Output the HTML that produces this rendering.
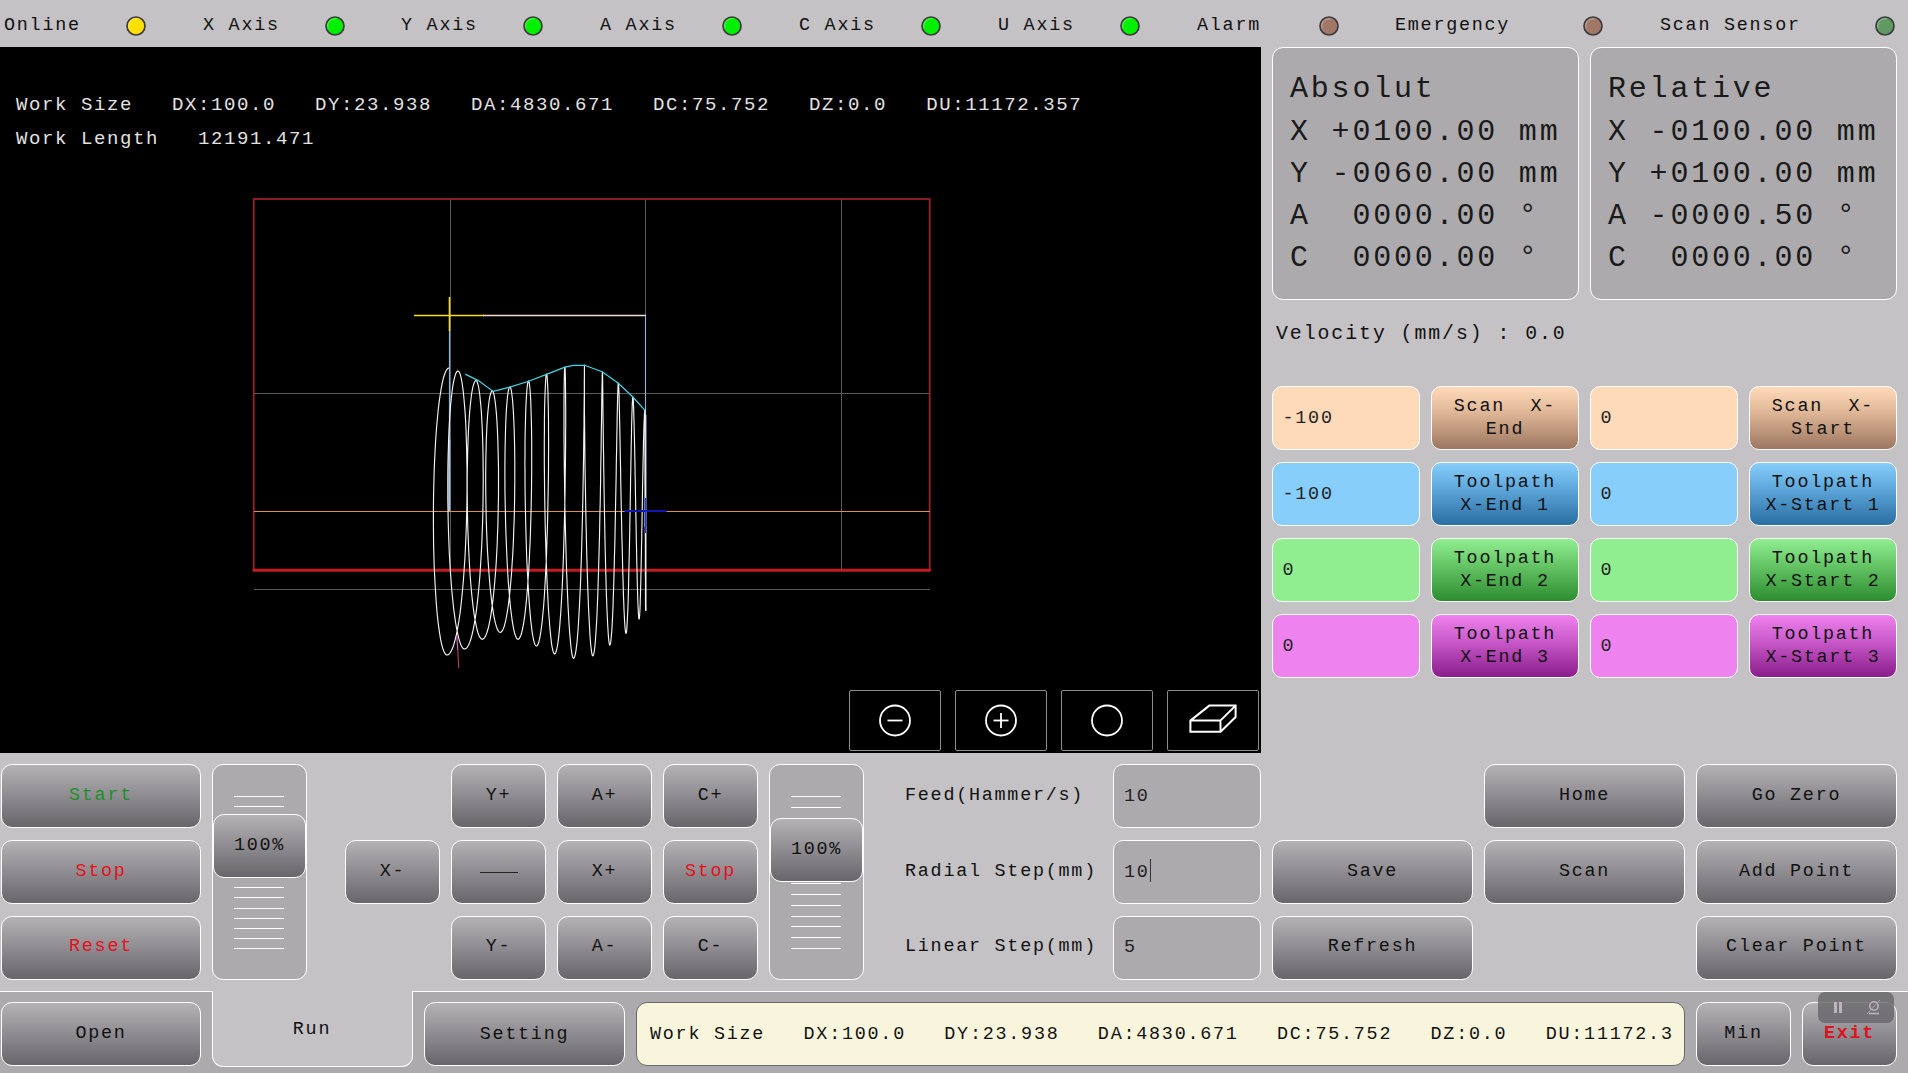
<!DOCTYPE html>
<html><head><meta charset="utf-8"><title>UI</title><style>
html,body{margin:0;padding:0;}
body{width:1908px;height:1073px;overflow:hidden;background:#c4c2c5;position:relative;font-family:"Liberation Mono", monospace;}
.t{position:absolute;white-space:nowrap;line-height:0;height:0;font-family:"Liberation Mono", monospace;}
.t::before{content:'';display:inline-block;height:40px;width:0;vertical-align:baseline;}
.ledsvg{position:absolute;}
.led{position:absolute;width:18px;height:18px;border-radius:50%;border:1.5px solid #3a2a20;box-sizing:content-box;}
#cv{position:absolute;left:0;top:47px;width:1261px;height:706px;background:#000;}
#dw{position:absolute;left:0;top:47px;}
.zb{position:absolute;width:92px;height:61px;box-sizing:border-box;border:1px solid #8c8c8c;border-radius:2px;}
.zb svg{position:absolute;left:-1px;top:-1px;}
.panel{position:absolute;box-sizing:border-box;border:1px solid #fff;border-radius:11px;background:#acaaad;}
.inp{position:absolute;box-sizing:border-box;border:1px solid #fff;border-radius:10px;}
.i-peach{background:#ffdab9} .i-blue{background:#87cefa} .i-green{background:#90ee90} .i-violet{background:#ee82ee} .i-gray{background:#acaaad}
.cb{position:absolute;box-sizing:border-box;border:1px solid #fff;border-radius:10px;}
.b-peach{background:linear-gradient(#ffdab9 0%,#e0b898 40%,#9c7660 100%)}
.b-blue{background:linear-gradient(#87cefa 0%,#5fa8dc 40%,#2a6ea2 100%)}
.b-green{background:linear-gradient(#90ee90 0%,#68c868 40%,#2c8c30 100%)}
.b-violet{background:linear-gradient(#ee82ee 0%,#cc5ccc 40%,#8a1c8c 100%)}
.gb{position:absolute;box-sizing:border-box;border:1px solid #fff;border-radius:11px;background:linear-gradient(#b4b2b5 0%,#8e8c90 50%,#68666a 100%);}
.sl{position:absolute;box-sizing:border-box;border:1px solid #fff;border-radius:11px;background:#acaaad;}
.tk{position:absolute;width:50px;height:1px;background:#fff;}
#bb{position:absolute;left:0;top:991px;width:1908px;height:82px;background:#acaaad;border-top:1px solid #fff;box-sizing:border-box;}
#run{position:absolute;left:212px;top:991px;width:201px;height:76px;box-sizing:border-box;background:#c4c2c5;border:1px solid #fff;border-top:none;border-radius:0 0 11px 11px;}
.status{position:absolute;box-sizing:border-box;background:#f8f5dc;border:1px solid #6a686c;border-radius:11px;}
#ov{position:absolute;left:1818px;top:992px;width:76px;height:31px;border-radius:7px;background:rgba(104,102,106,0.82);}
.pb{position:absolute;top:10px;width:3px;height:11px;background:#b8b6ba;}
</style></head><body>
<div class="t" style="left:4px;top:-10px;font-size:18.4px;color:#111;letter-spacing:1.76px;">Online</div>
<svg class="ledsvg" style="left:125px;top:15px" width="22" height="22" viewBox="0 0 22 22"><circle cx="11" cy="11" r="9" fill="#ffe000" stroke="#3c3a3e" stroke-width="1.7"/><path d="M4.2 13.5 A7.2 7.2 0 0 1 12.5 3.9" fill="none" stroke="rgba(255,255,255,0.35)" stroke-width="1.1"/></svg>
<div class="t" style="left:203px;top:-10px;font-size:18.4px;color:#111;letter-spacing:1.76px;">X&nbsp;Axis</div>
<svg class="ledsvg" style="left:324px;top:15px" width="22" height="22" viewBox="0 0 22 22"><circle cx="11" cy="11" r="9" fill="#00f000" stroke="#3c3a3e" stroke-width="1.7"/><path d="M4.2 13.5 A7.2 7.2 0 0 1 12.5 3.9" fill="none" stroke="rgba(255,255,255,0.35)" stroke-width="1.1"/></svg>
<div class="t" style="left:401px;top:-10px;font-size:18.4px;color:#111;letter-spacing:1.76px;">Y&nbsp;Axis</div>
<svg class="ledsvg" style="left:522px;top:15px" width="22" height="22" viewBox="0 0 22 22"><circle cx="11" cy="11" r="9" fill="#00f000" stroke="#3c3a3e" stroke-width="1.7"/><path d="M4.2 13.5 A7.2 7.2 0 0 1 12.5 3.9" fill="none" stroke="rgba(255,255,255,0.35)" stroke-width="1.1"/></svg>
<div class="t" style="left:600px;top:-10px;font-size:18.4px;color:#111;letter-spacing:1.76px;">A&nbsp;Axis</div>
<svg class="ledsvg" style="left:721px;top:15px" width="22" height="22" viewBox="0 0 22 22"><circle cx="11" cy="11" r="9" fill="#00f000" stroke="#3c3a3e" stroke-width="1.7"/><path d="M4.2 13.5 A7.2 7.2 0 0 1 12.5 3.9" fill="none" stroke="rgba(255,255,255,0.35)" stroke-width="1.1"/></svg>
<div class="t" style="left:799px;top:-10px;font-size:18.4px;color:#111;letter-spacing:1.76px;">C&nbsp;Axis</div>
<svg class="ledsvg" style="left:920px;top:15px" width="22" height="22" viewBox="0 0 22 22"><circle cx="11" cy="11" r="9" fill="#00f000" stroke="#3c3a3e" stroke-width="1.7"/><path d="M4.2 13.5 A7.2 7.2 0 0 1 12.5 3.9" fill="none" stroke="rgba(255,255,255,0.35)" stroke-width="1.1"/></svg>
<div class="t" style="left:998px;top:-10px;font-size:18.4px;color:#111;letter-spacing:1.76px;">U&nbsp;Axis</div>
<svg class="ledsvg" style="left:1119px;top:15px" width="22" height="22" viewBox="0 0 22 22"><circle cx="11" cy="11" r="9" fill="#00f000" stroke="#3c3a3e" stroke-width="1.7"/><path d="M4.2 13.5 A7.2 7.2 0 0 1 12.5 3.9" fill="none" stroke="rgba(255,255,255,0.35)" stroke-width="1.1"/></svg>
<div class="t" style="left:1197px;top:-10px;font-size:18.4px;color:#111;letter-spacing:1.76px;">Alarm</div>
<svg class="ledsvg" style="left:1318px;top:15px" width="22" height="22" viewBox="0 0 22 22"><circle cx="11" cy="11" r="9" fill="#a07868" stroke="#3c3a3e" stroke-width="1.7"/><path d="M4.2 13.5 A7.2 7.2 0 0 1 12.5 3.9" fill="none" stroke="rgba(255,255,255,0.35)" stroke-width="1.1"/></svg>
<div class="t" style="left:1395px;top:-10px;font-size:18.4px;color:#111;letter-spacing:1.76px;">Emergency</div>
<svg class="ledsvg" style="left:1582px;top:15px" width="22" height="22" viewBox="0 0 22 22"><circle cx="11" cy="11" r="9" fill="#a07868" stroke="#3c3a3e" stroke-width="1.7"/><path d="M4.2 13.5 A7.2 7.2 0 0 1 12.5 3.9" fill="none" stroke="rgba(255,255,255,0.35)" stroke-width="1.1"/></svg>
<div class="t" style="left:1660px;top:-10px;font-size:18.4px;color:#111;letter-spacing:1.76px;">Scan&nbsp;Sensor</div>
<svg class="ledsvg" style="left:1874px;top:15px" width="22" height="22" viewBox="0 0 22 22"><circle cx="11" cy="11" r="9" fill="#5f9a62" stroke="#3c3a3e" stroke-width="1.7"/><path d="M4.2 13.5 A7.2 7.2 0 0 1 12.5 3.9" fill="none" stroke="rgba(255,255,255,0.35)" stroke-width="1.1"/></svg>
<div id="cv"></div>
<div class="t" style="left:16px;top:70px;font-size:19px;color:#e2e2e2;letter-spacing:1.6px;">Work&nbsp;Size&nbsp;&nbsp;&nbsp;DX:100.0&nbsp;&nbsp;&nbsp;DY:23.938&nbsp;&nbsp;&nbsp;DA:4830.671&nbsp;&nbsp;&nbsp;DC:75.752&nbsp;&nbsp;&nbsp;DZ:0.0&nbsp;&nbsp;&nbsp;DU:11172.357</div>
<div class="t" style="left:16px;top:104px;font-size:19px;color:#e2e2e2;letter-spacing:1.6px;">Work&nbsp;Length&nbsp;&nbsp;&nbsp;12191.471</div>
<svg id="dw" width="1261" height="706" viewBox="0 47 1261 706" fill="none">
<line x1="450.5" y1="199" x2="450.5" y2="570" stroke="#5a5a5a" stroke-width="1"/>
<line x1="645.5" y1="199" x2="645.5" y2="570" stroke="#5a5a5a" stroke-width="1"/>
<line x1="841.5" y1="199" x2="841.5" y2="570" stroke="#5a5a5a" stroke-width="1"/>
<line x1="254" y1="393.5" x2="930" y2="393.5" stroke="#5a5a5a" stroke-width="1"/>
<line x1="254" y1="589.5" x2="930" y2="589.5" stroke="#5a5a5a" stroke-width="1"/>
<rect x="253.7" y="199" width="676" height="371" stroke="#a42028" stroke-width="1.7"/>
<line x1="252.6" y1="570.2" x2="930.8" y2="570.2" stroke="#c41a20" stroke-width="3"/>
<line x1="254" y1="511.5" x2="930" y2="511.5" stroke="#e09040" stroke-width="1.2"/>
<line x1="483" y1="315.5" x2="646" y2="315.5" stroke="#f0dcd0" stroke-width="1.3"/>
<line x1="414" y1="315.5" x2="484" y2="315.5" stroke="#f8dc20" stroke-width="1.3"/>
<line x1="449.5" y1="297" x2="449.5" y2="331" stroke="#f8dc20" stroke-width="1.6"/>
<line x1="449.5" y1="331" x2="449.5" y2="511" stroke="#8fb4dc" stroke-width="1.2"/>
<line x1="449.3" y1="440" x2="449.3" y2="511" stroke="#a8c8e8" stroke-width="2"/>
<line x1="645.5" y1="316" x2="645.5" y2="415" stroke="#8fb4dc" stroke-width="1.1"/>
<line x1="645.5" y1="415" x2="645.5" y2="527" stroke="#a8c4e4" stroke-width="2"/>
<line x1="645.8" y1="527" x2="645.8" y2="611" stroke="#c0c0c0" stroke-width="1.6"/>
<path d="M449.0,368.0 L447.8,368.4 L446.6,369.8 L445.5,372.0 L444.3,375.0 L443.2,378.9 L442.1,383.6 L441.1,389.1 L440.1,395.4 L439.1,402.4 L438.2,410.0 L437.4,418.3 L436.6,427.2 L435.9,436.5 L435.3,446.4 L434.8,456.6 L434.3,467.2 L434.0,478.0 L433.7,489.1 L433.5,500.2 L433.4,511.5 L433.4,522.8 L433.5,533.9 L433.6,545.0 L433.9,555.8 L434.2,566.4 L434.7,576.6 L435.2,586.5 L435.8,595.8 L436.4,604.7 L437.1,613.0 L437.9,620.6 L438.8,627.6 L439.7,633.9 L440.6,639.4 L441.6,644.1 L442.7,648.0 L443.7,651.0 L444.8,653.2 L445.9,654.6 L447.0,655.0 L448.4,654.6 L449.8,653.3 L451.2,651.1 L452.6,648.1 L453.9,644.2 L455.2,639.5 L456.5,634.1 L457.7,627.9 L458.9,621.0 L460.0,613.4 L461.0,605.2 L461.9,596.5 L462.8,587.2 L463.6,577.5 L464.3,567.3 L465.0,556.9 L465.5,546.1 L466.0,535.2 L466.4,524.1 L466.7,513.0 L466.9,501.9 L467.0,490.8 L467.0,479.9 L467.0,469.1 L466.8,458.7 L466.6,448.5 L466.3,438.8 L466.0,429.5 L465.6,420.8 L465.1,412.6 L464.5,405.0 L463.9,398.1 L463.3,391.9 L462.6,386.5 L461.9,381.8 L461.1,377.9 L460.4,374.9 L459.6,372.7 L458.8,371.4 L458.0,371.0 L457.1,371.4 L456.2,372.7 L455.3,374.8 L454.5,377.8 L453.6,381.6 L452.8,386.2 L452.1,391.5 L451.4,397.5 L450.7,404.3 L450.1,411.7 L449.6,419.7 L449.1,428.3 L448.7,437.4 L448.4,446.9 L448.1,456.8 L447.9,467.0 L447.8,477.6 L447.8,488.3 L447.8,499.1 L448.0,510.0 L448.2,520.9 L448.5,531.7 L448.9,542.4 L449.3,553.0 L449.9,563.2 L450.5,573.1 L451.2,582.6 L451.9,591.7 L452.8,600.3 L453.6,608.3 L454.6,615.7 L455.6,622.5 L456.6,628.5 L457.7,633.8 L458.8,638.4 L459.9,642.2 L461.1,645.2 L462.2,647.3 L463.4,648.6 L464.6,649.0 L465.9,648.6 L467.2,647.3 L468.5,645.3 L469.7,642.4 L471.0,638.8 L472.1,634.4 L473.3,629.2 L474.4,623.4 L475.5,616.8 L476.5,609.7 L477.4,602.0 L478.3,593.7 L479.1,584.9 L479.9,575.7 L480.5,566.2 L481.1,556.3 L481.7,546.1 L482.1,535.8 L482.5,525.3 L482.8,514.8 L483.0,504.3 L483.1,493.8 L483.2,483.5 L483.2,473.3 L483.1,463.4 L483.0,453.9 L482.8,444.7 L482.5,435.9 L482.2,427.6 L481.8,419.9 L481.4,412.8 L480.9,406.2 L480.3,400.4 L479.8,395.2 L479.2,390.8 L478.6,387.2 L478.0,384.3 L477.3,382.3 L476.7,381.0 L476.0,380.6 L475.2,381.0 L474.4,382.2 L473.7,384.2 L472.9,386.9 L472.2,390.4 L471.5,394.7 L470.9,399.7 L470.3,405.3 L469.7,411.6 L469.2,418.5 L468.7,425.9 L468.3,433.9 L468.0,442.4 L467.7,451.2 L467.5,460.4 L467.3,470.0 L467.2,479.8 L467.2,489.7 L467.3,499.8 L467.4,509.9 L467.6,520.1 L467.9,530.2 L468.3,540.1 L468.7,549.9 L469.2,559.5 L469.7,568.7 L470.3,577.5 L471.0,586.0 L471.7,594.0 L472.5,601.4 L473.3,608.3 L474.2,614.6 L475.1,620.2 L476.1,625.2 L477.0,629.5 L478.0,633.0 L479.1,635.7 L480.1,637.7 L481.2,638.9 L482.2,639.3 L483.3,638.9 L484.5,637.8 L485.6,635.9 L486.7,633.2 L487.8,629.8 L488.8,625.8 L489.8,621.0 L490.8,615.6 L491.7,609.6 L492.6,602.9 L493.4,595.8 L494.2,588.1 L494.9,580.0 L495.6,571.5 L496.2,562.7 L496.7,553.5 L497.2,544.1 L497.5,534.6 L497.9,524.9 L498.1,515.1 L498.3,505.4 L498.5,495.7 L498.5,486.2 L498.5,476.8 L498.5,467.6 L498.3,458.8 L498.1,450.3 L497.9,442.2 L497.6,434.5 L497.3,427.4 L496.9,420.7 L496.5,414.7 L496.0,409.3 L495.5,404.5 L495.0,400.5 L494.5,397.1 L493.9,394.4 L493.3,392.5 L492.8,391.4 L492.2,391.0 L491.6,391.4 L491.0,392.5 L490.4,394.3 L489.8,396.9 L489.2,400.2 L488.7,404.2 L488.2,408.8 L487.7,414.1 L487.3,419.9 L486.9,426.4 L486.6,433.3 L486.3,440.8 L486.1,448.6 L485.9,456.9 L485.8,465.5 L485.7,474.4 L485.7,483.5 L485.8,492.8 L485.9,502.2 L486.1,511.7 L486.3,521.2 L486.6,530.6 L487.0,539.9 L487.4,549.0 L487.9,557.9 L488.5,566.5 L489.1,574.8 L489.7,582.6 L490.4,590.1 L491.2,597.0 L491.9,603.5 L492.8,609.3 L493.6,614.6 L494.5,619.2 L495.4,623.2 L496.4,626.5 L497.3,629.1 L498.3,630.9 L499.2,632.0 L500.2,632.4 L501.2,632.0 L502.2,630.9 L503.2,629.0 L504.2,626.4 L505.1,623.1 L506.0,619.0 L506.9,614.3 L507.8,609.0 L508.6,603.0 L509.4,596.5 L510.1,589.4 L510.8,581.8 L511.5,573.8 L512.0,565.4 L512.6,556.7 L513.1,547.6 L513.5,538.3 L513.8,528.9 L514.2,519.3 L514.4,509.7 L514.6,500.1 L514.7,490.5 L514.8,481.1 L514.8,471.8 L514.8,462.7 L514.7,454.0 L514.6,445.6 L514.4,437.6 L514.2,430.0 L513.9,422.9 L513.6,416.4 L513.3,410.4 L512.9,405.1 L512.6,400.4 L512.1,396.3 L511.7,393.0 L511.3,390.4 L510.8,388.5 L510.4,387.4 L509.9,387.0 L509.4,387.4 L508.9,388.6 L508.4,390.5 L508.0,393.2 L507.5,396.6 L507.1,400.7 L506.7,405.6 L506.3,411.1 L506.0,417.2 L505.7,423.9 L505.5,431.2 L505.3,439.0 L505.1,447.2 L505.0,455.9 L504.9,464.9 L504.9,474.2 L504.9,483.7 L505.0,493.4 L505.2,503.3 L505.4,513.1 L505.6,523.0 L505.9,532.9 L506.3,542.6 L506.7,552.1 L507.1,561.4 L507.6,570.4 L508.1,579.1 L508.7,587.3 L509.4,595.1 L510.0,602.4 L510.7,609.1 L511.5,615.2 L512.2,620.7 L513.0,625.6 L513.8,629.7 L514.6,633.1 L515.5,635.8 L516.3,637.7 L517.1,638.9 L518.0,639.3 L518.9,638.9 L519.8,637.7 L520.7,635.7 L521.6,633.0 L522.4,629.5 L523.3,625.2 L524.1,620.3 L524.9,614.6 L525.6,608.4 L526.3,601.5 L527.0,594.0 L527.6,586.1 L528.2,577.6 L528.8,568.8 L529.3,559.6 L529.7,550.1 L530.2,540.3 L530.5,530.4 L530.8,520.3 L531.1,510.1 L531.3,500.0 L531.5,489.9 L531.6,480.0 L531.7,470.2 L531.7,460.7 L531.7,451.5 L531.7,442.7 L531.6,434.2 L531.5,426.3 L531.3,418.8 L531.1,411.9 L530.9,405.7 L530.7,400.0 L530.4,395.1 L530.1,390.8 L529.8,387.3 L529.5,384.6 L529.2,382.6 L528.9,381.4 L528.6,381.0 L528.2,381.4 L527.8,382.6 L527.5,384.7 L527.1,387.5 L526.8,391.1 L526.5,395.4 L526.2,400.5 L525.9,406.3 L525.7,412.8 L525.5,419.8 L525.3,427.5 L525.1,435.6 L525.0,444.3 L525.0,453.4 L524.9,462.8 L525.0,472.6 L525.0,482.6 L525.1,492.8 L525.3,503.2 L525.5,513.5 L525.7,523.9 L526.0,534.3 L526.3,544.5 L526.6,554.5 L527.0,564.3 L527.5,573.7 L528.0,582.8 L528.5,591.5 L529.0,599.6 L529.6,607.3 L530.2,614.3 L530.8,620.8 L531.5,626.6 L532.1,631.7 L532.8,636.0 L533.5,639.6 L534.2,642.4 L535.0,644.5 L535.7,645.7 L536.4,646.1 L537.2,645.7 L538.0,644.4 L538.7,642.3 L539.5,639.4 L540.2,635.7 L540.9,631.3 L541.6,626.1 L542.3,620.1 L542.9,613.5 L543.6,606.3 L544.2,598.4 L544.7,590.0 L545.2,581.1 L545.7,571.8 L546.2,562.1 L546.6,552.1 L546.9,541.8 L547.3,531.3 L547.6,520.7 L547.8,510.1 L548.0,499.4 L548.2,488.8 L548.4,478.3 L548.5,468.0 L548.5,458.0 L548.6,448.3 L548.6,439.0 L548.5,430.1 L548.5,421.7 L548.4,413.8 L548.3,406.6 L548.1,400.0 L548.0,394.0 L547.8,388.8 L547.6,384.4 L547.4,380.7 L547.2,377.8 L547.0,375.7 L546.8,374.4 L546.6,374.0 L546.3,374.4 L546.1,375.7 L545.8,377.9 L545.6,380.9 L545.4,384.7 L545.2,389.3 L545.0,394.6 L544.8,400.7 L544.6,407.5 L544.5,415.0 L544.4,423.1 L544.4,431.7 L544.3,440.9 L544.3,450.4 L544.3,460.4 L544.4,470.7 L544.5,481.3 L544.6,492.1 L544.8,503.0 L545.0,514.0 L545.2,525.0 L545.5,535.9 L545.8,546.7 L546.1,557.3 L546.5,567.6 L546.9,577.6 L547.3,587.1 L547.8,596.3 L548.2,604.9 L548.7,613.0 L549.3,620.5 L549.8,627.3 L550.4,633.4 L551.0,638.7 L551.5,643.3 L552.1,647.1 L552.8,650.1 L553.4,652.3 L554.0,653.6 L554.6,654.0 L555.3,653.6 L555.9,652.2 L556.6,650.0 L557.2,647.0 L557.9,643.1 L558.5,638.4 L559.1,632.9 L559.7,626.6 L560.2,619.6 L560.8,612.0 L561.3,603.7 L561.8,594.8 L562.3,585.5 L562.7,575.6 L563.1,565.4 L563.5,554.8 L563.8,544.0 L564.1,532.9 L564.4,521.8 L564.7,510.5 L564.9,499.2 L565.1,488.1 L565.2,477.0 L565.4,466.2 L565.5,455.6 L565.6,445.4 L565.6,435.5 L565.7,426.2 L565.7,417.3 L565.7,409.0 L565.6,401.4 L565.6,394.4 L565.5,388.1 L565.5,382.6 L565.4,377.9 L565.3,374.0 L565.2,371.0 L565.1,368.8 L565.0,367.4 L564.9,367.0 L564.8,367.4 L564.6,368.8 L564.5,371.0 L564.4,374.1 L564.3,378.1 L564.2,382.9 L564.1,388.5 L564.1,394.8 L564.0,401.9 L564.0,409.7 L564.0,418.1 L564.0,427.0 L564.0,436.5 L564.1,446.5 L564.2,456.9 L564.3,467.6 L564.5,478.6 L564.6,489.9 L564.8,501.2 L565.0,512.6 L565.3,524.1 L565.6,535.4 L565.9,546.7 L566.2,557.7 L566.5,568.4 L566.9,578.8 L567.3,588.8 L567.7,598.3 L568.1,607.2 L568.6,615.6 L569.0,623.4 L569.5,630.5 L570.0,636.8 L570.5,642.4 L571.0,647.2 L571.5,651.2 L572.0,654.3 L572.5,656.5 L573.1,657.9 L573.6,658.3 L574.2,657.8 L574.7,656.5 L575.3,654.2 L575.9,651.1 L576.4,647.1 L577.0,642.3 L577.5,636.7 L578.0,630.3 L578.5,623.2 L578.9,615.3 L579.4,606.9 L579.8,597.8 L580.3,588.3 L580.7,578.2 L581.0,567.8 L581.4,557.0 L581.7,545.9 L582.0,534.6 L582.3,523.2 L582.6,511.6 L582.8,500.1 L583.0,488.7 L583.2,477.4 L583.4,466.3 L583.6,455.5 L583.7,445.1 L583.8,435.0 L584.0,425.5 L584.0,416.4 L584.1,408.0 L584.2,400.1 L584.3,393.0 L584.3,386.6 L584.3,381.0 L584.4,376.2 L584.4,372.2 L584.4,369.1 L584.5,366.8 L584.5,365.5 L584.5,365.0 L584.5,365.4 L584.4,366.8 L584.4,369.0 L584.4,372.1 L584.4,376.1 L584.4,380.9 L584.4,386.4 L584.4,392.8 L584.4,399.8 L584.4,407.6 L584.5,416.0 L584.6,425.0 L584.7,434.5 L584.8,444.4 L584.9,454.8 L585.0,465.5 L585.2,476.5 L585.4,487.7 L585.6,499.0 L585.8,510.4 L586.0,521.9 L586.3,533.2 L586.5,544.4 L586.8,555.4 L587.1,566.1 L587.4,576.5 L587.7,586.4 L588.1,595.9 L588.4,604.9 L588.8,613.3 L589.2,621.1 L589.6,628.1 L589.9,634.5 L590.3,640.0 L590.7,644.8 L591.2,648.8 L591.6,651.9 L592.0,654.1 L592.4,655.5 L592.8,655.9 L593.2,655.5 L593.7,654.2 L594.1,652.0 L594.6,649.0 L595.0,645.1 L595.4,640.4 L595.8,635.0 L596.2,628.8 L596.6,621.9 L597.0,614.3 L597.3,606.1 L597.7,597.4 L598.0,588.1 L598.3,578.4 L598.6,568.3 L598.9,557.8 L599.2,547.1 L599.5,536.2 L599.7,525.1 L599.9,514.0 L600.2,502.8 L600.4,491.7 L600.6,480.8 L600.7,470.1 L600.9,459.6 L601.1,449.5 L601.2,439.8 L601.3,430.5 L601.5,421.8 L601.6,413.6 L601.7,406.0 L601.8,399.1 L601.9,392.9 L602.0,387.5 L602.1,382.8 L602.2,378.9 L602.2,375.9 L602.3,373.7 L602.4,372.4 L602.5,372.0 L602.5,372.4 L602.6,373.7 L602.6,375.8 L602.6,378.7 L602.7,382.4 L602.7,386.9 L602.8,392.1 L602.8,398.1 L602.9,404.7 L603.0,412.0 L603.1,419.9 L603.2,428.3 L603.3,437.2 L603.4,446.6 L603.6,456.3 L603.7,466.4 L603.9,476.7 L604.0,487.2 L604.2,497.8 L604.4,508.6 L604.6,519.3 L604.8,529.9 L605.0,540.4 L605.2,550.7 L605.5,560.8 L605.7,570.5 L606.0,579.9 L606.2,588.8 L606.5,597.2 L606.8,605.1 L607.1,612.4 L607.4,619.0 L607.7,625.0 L608.0,630.2 L608.3,634.7 L608.6,638.4 L608.9,641.3 L609.2,643.4 L609.5,644.7 L609.8,645.1 L610.1,644.7 L610.5,643.5 L610.8,641.5 L611.1,638.7 L611.4,635.1 L611.8,630.8 L612.1,625.8 L612.4,620.1 L612.7,613.7 L613.0,606.7 L613.2,599.2 L613.5,591.1 L613.8,582.5 L614.0,573.5 L614.3,564.2 L614.5,554.5 L614.8,544.6 L615.0,534.6 L615.2,524.3 L615.4,514.0 L615.6,503.8 L615.8,493.5 L616.0,483.5 L616.2,473.6 L616.3,463.9 L616.5,454.6 L616.7,445.6 L616.8,437.0 L617.0,428.9 L617.1,421.4 L617.2,414.4 L617.4,408.0 L617.5,402.3 L617.6,397.3 L617.8,393.0 L617.9,389.4 L618.0,386.6 L618.1,384.6 L618.3,383.4 L618.4,383.0 L618.5,383.4 L618.6,384.5 L618.7,386.5 L618.8,389.1 L619.0,392.5 L619.1,396.6 L619.2,401.4 L619.3,406.9 L619.5,413.0 L619.6,419.7 L619.8,426.9 L619.9,434.6 L620.1,442.8 L620.2,451.4 L620.4,460.3 L620.6,469.5 L620.7,479.0 L620.9,488.6 L621.1,498.4 L621.3,508.2 L621.5,518.0 L621.7,527.8 L621.9,537.4 L622.2,546.9 L622.4,556.1 L622.6,565.0 L622.8,573.6 L623.1,581.8 L623.3,589.5 L623.5,596.7 L623.8,603.4 L624.0,609.5 L624.3,615.0 L624.5,619.8 L624.8,623.9 L625.0,627.3 L625.3,629.9 L625.5,631.9 L625.8,633.0 L626.0,633.4 L626.2,633.0 L626.5,631.9 L626.7,630.1 L626.9,627.6 L627.1,624.4 L627.3,620.5 L627.5,616.0 L627.8,610.8 L628.0,605.1 L628.2,598.8 L628.4,592.0 L628.6,584.7 L628.7,577.0 L628.9,568.9 L629.1,560.4 L629.3,551.7 L629.5,542.8 L629.7,533.7 L629.8,524.5 L630.0,515.2 L630.2,505.9 L630.3,496.7 L630.5,487.6 L630.6,478.7 L630.8,470.0 L630.9,461.5 L631.1,453.4 L631.2,445.7 L631.4,438.4 L631.5,431.6 L631.6,425.3 L631.8,419.6 L631.9,414.4 L632.1,409.9 L632.2,406.0 L632.3,402.8 L632.5,400.3 L632.6,398.5 L632.8,397.4 L632.9,397.0 L633.0,397.3 L633.2,398.4 L633.3,400.1 L633.4,402.4 L633.5,405.5 L633.7,409.1 L633.8,413.4 L633.9,418.2 L634.1,423.6 L634.2,429.5 L634.4,435.9 L634.5,442.8 L634.7,450.0 L634.8,457.6 L635.0,465.6 L635.1,473.7 L635.3,482.1 L635.4,490.7 L635.6,499.3 L635.7,508.1 L635.9,516.8 L636.1,525.4 L636.2,534.0 L636.4,542.4 L636.6,550.5 L636.7,558.5 L636.9,566.1 L637.1,573.3 L637.2,580.2 L637.4,586.6 L637.6,592.5 L637.7,597.9 L637.9,602.7 L638.1,607.0 L638.3,610.6 L638.4,613.7 L638.6,616.0 L638.8,617.7 L638.9,618.8 L639.1,619.1 L639.3,618.8 L639.4,617.8 L639.6,616.2 L639.7,614.0 L639.9,611.1 L640.0,607.7 L640.2,603.7 L640.3,599.1 L640.5,594.1 L640.6,588.5 L640.8,582.4 L640.9,576.0 L641.1,569.2 L641.2,562.0 L641.4,554.6 L641.5,546.9 L641.7,539.0 L641.8,530.9 L642.0,522.8 L642.1,514.5 L642.3,506.3 L642.4,498.2 L642.5,490.1 L642.7,482.2 L642.8,474.5 L643.0,467.1 L643.1,459.9 L643.3,453.1 L643.4,446.7 L643.5,440.6 L643.7,435.0 L643.8,430.0 L644.0,425.4 L644.1,421.4 L644.3,418.0 L644.4,415.1 L644.6,412.9 L644.7,411.3 L644.9,410.3 L645.0,410.0 L645.0,410.3 L645.0,411.2 L645.0,412.8 L645.1,414.9 L645.1,417.6 L645.1,420.9 L645.1,424.8 L645.1,429.1 L645.1,434.0 L645.1,439.4 L645.2,445.1 L645.2,451.3 L645.2,457.9 L645.2,464.7 L645.2,471.9 L645.2,479.3 L645.3,486.8 L645.3,494.6 L645.3,502.4 L645.3,510.2 L645.3,518.1 L645.3,525.9 L645.3,533.7 L645.4,541.2 L645.4,548.6 L645.4,555.8 L645.4,562.6 L645.4,569.2 L645.4,575.4 L645.5,581.1 L645.5,586.5 L645.5,591.4 L645.5,595.7 L645.5,599.6 L645.5,602.9 L645.5,605.6 L645.6,607.7 L645.6,609.3 L645.6,610.2 L645.6,610.5" stroke="#f4f4f4" stroke-width="1.15" stroke-linejoin="round"/>
<polyline points="465.2,374.1 478.3,380.6 493.2,391.4 509.9,387.1 528.6,381.2 547.2,374.1 564.9,367.2 573.3,365.3 584.5,365.3 602.2,371.7 618,383 632.9,397 645,410.4" stroke="#40d8e8" stroke-width="1.2"/>
<line x1="624.5" y1="511" x2="666.5" y2="511" stroke="#0c18b0" stroke-width="2"/>
<line x1="645.5" y1="498" x2="645.5" y2="533" stroke="#2030e0" stroke-width="1.2"/>
<line x1="456.8" y1="636" x2="457.8" y2="650" stroke="#e060c0" stroke-width="1.2"/>
<line x1="457.8" y1="650" x2="458.7" y2="668" stroke="#c04040" stroke-width="1.1"/>
</svg>
<div class="zb" style="left:849px;top:690px"><svg width="92" height="61" viewBox="0 0 92 61" fill="none"><circle cx="46" cy="30.5" r="15" stroke="#fff" stroke-width="1.8"/><line x1="38.5" y1="30.5" x2="53.5" y2="30.5" stroke="#fff" stroke-width="1.8"/></svg></div>
<div class="zb" style="left:955px;top:690px"><svg width="92" height="61" viewBox="0 0 92 61" fill="none"><circle cx="46" cy="30.5" r="15" stroke="#fff" stroke-width="1.8"/><line x1="38.5" y1="30.5" x2="53.5" y2="30.5" stroke="#fff" stroke-width="1.8"/><line x1="46" y1="23" x2="46" y2="38" stroke="#fff" stroke-width="1.8"/></svg></div>
<div class="zb" style="left:1061px;top:690px"><svg width="92" height="61" viewBox="0 0 92 61" fill="none"><circle cx="46" cy="30.5" r="15" stroke="#fff" stroke-width="1.8"/></svg></div>
<div class="zb" style="left:1167px;top:690px"><svg width="92" height="61" viewBox="0 0 92 61" fill="none"><path d="M23.4 30.6 L42.3 15.6 L68.6 15.6 L68.6 27 L53.6 41.7 L23.4 41.7 Z M23.4 30.6 L53.4 30.6 L68.6 15.6 M53.4 30.6 L53.6 41.7" stroke="#fff" stroke-width="2" stroke-linejoin="miter"/></svg></div>
<div class="panel" style="left:1272px;top:47px;width:307px;height:253px;"></div>
<div class="panel" style="left:1590px;top:47px;width:307px;height:253px;"></div>
<div class="t" style="left:1290px;top:57px;font-size:30px;color:#1a1a1a;letter-spacing:2.8px;">Absolut</div>
<div class="t" style="left:1290px;top:100px;font-size:30px;color:#1a1a1a;letter-spacing:2.8px;">X&nbsp;+0100.00&nbsp;mm</div>
<div class="t" style="left:1290px;top:142px;font-size:30px;color:#1a1a1a;letter-spacing:2.8px;">Y&nbsp;-0060.00&nbsp;mm</div>
<div class="t" style="left:1290px;top:184px;font-size:30px;color:#1a1a1a;letter-spacing:2.8px;">A&nbsp;&nbsp;0000.00&nbsp;°</div>
<div class="t" style="left:1290px;top:226px;font-size:30px;color:#1a1a1a;letter-spacing:2.8px;">C&nbsp;&nbsp;0000.00&nbsp;°</div>
<div class="t" style="left:1608px;top:57px;font-size:30px;color:#1a1a1a;letter-spacing:2.8px;">Relative</div>
<div class="t" style="left:1608px;top:100px;font-size:30px;color:#1a1a1a;letter-spacing:2.8px;">X&nbsp;-0100.00&nbsp;mm</div>
<div class="t" style="left:1608px;top:142px;font-size:30px;color:#1a1a1a;letter-spacing:2.8px;">Y&nbsp;+0100.00&nbsp;mm</div>
<div class="t" style="left:1608px;top:184px;font-size:30px;color:#1a1a1a;letter-spacing:2.8px;">A&nbsp;-0000.50&nbsp;°</div>
<div class="t" style="left:1608px;top:226px;font-size:30px;color:#1a1a1a;letter-spacing:2.8px;">C&nbsp;&nbsp;0000.00&nbsp;°</div>
<div class="t" style="left:1276px;top:299px;font-size:19.8px;color:#111;letter-spacing:1.97px;">Velocity&nbsp;(mm/s)&nbsp;:&nbsp;0.0</div>
<div class="inp i-peach" style="left:1272px;top:386px;width:148px;height:64px;"></div>
<div class="t" style="left:1282.5px;top:383px;font-size:18.4px;color:#222;letter-spacing:1.76px;">-100</div>
<div class="cb b-peach" style="left:1431px;top:386px;width:148px;height:64px;"></div>
<div class="t" style="left:1453.8px;top:371px;font-size:18.4px;color:#111;letter-spacing:1.76px;">Scan&nbsp;&nbsp;X-</div>
<div class="t" style="left:1485.8px;top:393.6px;font-size:18.4px;color:#111;letter-spacing:1.76px;">End</div>
<div class="inp i-peach" style="left:1590px;top:386px;width:148px;height:64px;"></div>
<div class="t" style="left:1600.5px;top:383px;font-size:18.4px;color:#222;letter-spacing:1.76px;">0</div>
<div class="cb b-peach" style="left:1749px;top:386px;width:148px;height:64px;"></div>
<div class="t" style="left:1771.8px;top:371px;font-size:18.4px;color:#111;letter-spacing:1.76px;">Scan&nbsp;&nbsp;X-</div>
<div class="t" style="left:1791.0px;top:393.6px;font-size:18.4px;color:#111;letter-spacing:1.76px;">Start</div>
<div class="inp i-blue" style="left:1272px;top:462px;width:148px;height:64px;"></div>
<div class="t" style="left:1282.5px;top:459px;font-size:18.4px;color:#222;letter-spacing:1.76px;">-100</div>
<div class="cb b-blue" style="left:1431px;top:462px;width:148px;height:64px;"></div>
<div class="t" style="left:1453.8px;top:447px;font-size:18.4px;color:#111;letter-spacing:1.76px;">Toolpath</div>
<div class="t" style="left:1460.2px;top:469.6px;font-size:18.4px;color:#111;letter-spacing:1.76px;">X-End&nbsp;1</div>
<div class="inp i-blue" style="left:1590px;top:462px;width:148px;height:64px;"></div>
<div class="t" style="left:1600.5px;top:459px;font-size:18.4px;color:#222;letter-spacing:1.76px;">0</div>
<div class="cb b-blue" style="left:1749px;top:462px;width:148px;height:64px;"></div>
<div class="t" style="left:1771.8px;top:447px;font-size:18.4px;color:#111;letter-spacing:1.76px;">Toolpath</div>
<div class="t" style="left:1765.4px;top:469.6px;font-size:18.4px;color:#111;letter-spacing:1.76px;">X-Start&nbsp;1</div>
<div class="inp i-green" style="left:1272px;top:538px;width:148px;height:64px;"></div>
<div class="t" style="left:1282.5px;top:535px;font-size:18.4px;color:#222;letter-spacing:1.76px;">0</div>
<div class="cb b-green" style="left:1431px;top:538px;width:148px;height:64px;"></div>
<div class="t" style="left:1453.8px;top:523px;font-size:18.4px;color:#111;letter-spacing:1.76px;">Toolpath</div>
<div class="t" style="left:1460.2px;top:545.6px;font-size:18.4px;color:#111;letter-spacing:1.76px;">X-End&nbsp;2</div>
<div class="inp i-green" style="left:1590px;top:538px;width:148px;height:64px;"></div>
<div class="t" style="left:1600.5px;top:535px;font-size:18.4px;color:#222;letter-spacing:1.76px;">0</div>
<div class="cb b-green" style="left:1749px;top:538px;width:148px;height:64px;"></div>
<div class="t" style="left:1771.8px;top:523px;font-size:18.4px;color:#111;letter-spacing:1.76px;">Toolpath</div>
<div class="t" style="left:1765.4px;top:545.6px;font-size:18.4px;color:#111;letter-spacing:1.76px;">X-Start&nbsp;2</div>
<div class="inp i-violet" style="left:1272px;top:614px;width:148px;height:64px;"></div>
<div class="t" style="left:1282.5px;top:611px;font-size:18.4px;color:#222;letter-spacing:1.76px;">0</div>
<div class="cb b-violet" style="left:1431px;top:614px;width:148px;height:64px;"></div>
<div class="t" style="left:1453.8px;top:599px;font-size:18.4px;color:#111;letter-spacing:1.76px;">Toolpath</div>
<div class="t" style="left:1460.2px;top:621.6px;font-size:18.4px;color:#111;letter-spacing:1.76px;">X-End&nbsp;3</div>
<div class="inp i-violet" style="left:1590px;top:614px;width:148px;height:64px;"></div>
<div class="t" style="left:1600.5px;top:611px;font-size:18.4px;color:#222;letter-spacing:1.76px;">0</div>
<div class="cb b-violet" style="left:1749px;top:614px;width:148px;height:64px;"></div>
<div class="t" style="left:1771.8px;top:599px;font-size:18.4px;color:#111;letter-spacing:1.76px;">Toolpath</div>
<div class="t" style="left:1765.4px;top:621.6px;font-size:18.4px;color:#111;letter-spacing:1.76px;">X-Start&nbsp;3</div>
<div class="gb" style="left:1px;top:764px;width:200px;height:64px;"></div>
<div class="t" style="left:69.0px;top:760px;font-size:18.4px;color:#1f8f2c;letter-spacing:1.76px;">Start</div>
<div class="gb" style="left:1px;top:840px;width:200px;height:64px;"></div>
<div class="t" style="left:75.4px;top:836px;font-size:18.4px;color:#e81020;letter-spacing:1.76px;">Stop</div>
<div class="gb" style="left:1px;top:916px;width:200px;height:64px;"></div>
<div class="t" style="left:69.0px;top:911px;font-size:18.4px;color:#e81020;letter-spacing:1.76px;">Reset</div>
<div class="sl" style="left:212px;top:764px;width:95px;height:216px;"></div>
<div class="tk" style="left:234px;top:796px"></div>
<div class="tk" style="left:234px;top:806px"></div>
<div class="tk" style="left:234px;top:817px"></div>
<div class="tk" style="left:234px;top:827px"></div>
<div class="tk" style="left:234px;top:837px"></div>
<div class="tk" style="left:234px;top:847px"></div>
<div class="tk" style="left:234px;top:857px"></div>
<div class="tk" style="left:234px;top:867px"></div>
<div class="tk" style="left:234px;top:877px"></div>
<div class="tk" style="left:234px;top:887px"></div>
<div class="tk" style="left:234px;top:897px"></div>
<div class="tk" style="left:234px;top:908px"></div>
<div class="tk" style="left:234px;top:918px"></div>
<div class="tk" style="left:234px;top:928px"></div>
<div class="tk" style="left:234px;top:938px"></div>
<div class="tk" style="left:234px;top:948px"></div>
<div class="gb" style="left:213px;top:814px;width:93px;height:64px;"></div>
<div class="t" style="left:233.9px;top:810px;font-size:18.4px;color:#111;letter-spacing:1.76px;">100%</div>
<div class="sl" style="left:769px;top:764px;width:95px;height:216px;"></div>
<div class="tk" style="left:791px;top:796px"></div>
<div class="tk" style="left:791px;top:807px"></div>
<div class="tk" style="left:791px;top:818px"></div>
<div class="tk" style="left:791px;top:829px"></div>
<div class="tk" style="left:791px;top:840px"></div>
<div class="tk" style="left:791px;top:851px"></div>
<div class="tk" style="left:791px;top:861px"></div>
<div class="tk" style="left:791px;top:872px"></div>
<div class="tk" style="left:791px;top:883px"></div>
<div class="tk" style="left:791px;top:894px"></div>
<div class="tk" style="left:791px;top:905px"></div>
<div class="tk" style="left:791px;top:916px"></div>
<div class="tk" style="left:791px;top:926px"></div>
<div class="tk" style="left:791px;top:937px"></div>
<div class="tk" style="left:791px;top:948px"></div>
<div class="gb" style="left:770px;top:818px;width:93px;height:64px;"></div>
<div class="t" style="left:790.9px;top:814px;font-size:18.4px;color:#111;letter-spacing:1.76px;">100%</div>
<div class="gb" style="left:345px;top:840px;width:95px;height:64px;"></div>
<div class="t" style="left:379.7px;top:836px;font-size:18.4px;color:#111;letter-spacing:1.76px;">X-</div>
<div class="gb" style="left:451px;top:764px;width:95px;height:64px;"></div>
<div class="t" style="left:485.7px;top:760px;font-size:18.4px;color:#111;letter-spacing:1.76px;">Y+</div>
<div class="gb" style="left:451px;top:840px;width:95px;height:64px;"></div>
<div class="gb" style="left:451px;top:916px;width:95px;height:64px;"></div>
<div class="t" style="left:485.7px;top:911px;font-size:18.4px;color:#111;letter-spacing:1.76px;">Y-</div>
<div style="position:absolute;left:480px;top:872px;width:38px;height:1px;background:#222"></div>
<div class="gb" style="left:557px;top:764px;width:95px;height:64px;"></div>
<div class="t" style="left:591.7px;top:760px;font-size:18.4px;color:#111;letter-spacing:1.76px;">A+</div>
<div class="gb" style="left:557px;top:840px;width:95px;height:64px;"></div>
<div class="t" style="left:591.7px;top:836px;font-size:18.4px;color:#111;letter-spacing:1.76px;">X+</div>
<div class="gb" style="left:557px;top:916px;width:95px;height:64px;"></div>
<div class="t" style="left:591.7px;top:911px;font-size:18.4px;color:#111;letter-spacing:1.76px;">A-</div>
<div class="gb" style="left:663px;top:764px;width:95px;height:64px;"></div>
<div class="t" style="left:697.7px;top:760px;font-size:18.4px;color:#111;letter-spacing:1.76px;">C+</div>
<div class="gb" style="left:663px;top:840px;width:95px;height:64px;"></div>
<div class="t" style="left:684.9px;top:836px;font-size:18.4px;color:#e81020;letter-spacing:1.76px;">Stop</div>
<div class="gb" style="left:663px;top:916px;width:95px;height:64px;"></div>
<div class="t" style="left:697.7px;top:911px;font-size:18.4px;color:#111;letter-spacing:1.76px;">C-</div>
<div class="t" style="left:905px;top:760px;font-size:18.4px;color:#111;letter-spacing:1.76px;">Feed(Hammer/s)</div>
<div class="t" style="left:905px;top:836px;font-size:18.4px;color:#111;letter-spacing:1.76px;">Radial&nbsp;Step(mm)</div>
<div class="t" style="left:905px;top:911px;font-size:18.4px;color:#111;letter-spacing:1.76px;">Linear&nbsp;Step(mm)</div>
<div class="inp i-gray" style="left:1113px;top:764px;width:148px;height:64px;"></div>
<div class="t" style="left:1124px;top:761px;font-size:18.4px;color:#222;letter-spacing:1.76px;">10</div>
<div class="inp i-gray" style="left:1113px;top:840px;width:148px;height:64px;"></div>
<div class="t" style="left:1124px;top:837px;font-size:18.4px;color:#222;letter-spacing:1.76px;">10</div>
<div class="inp i-gray" style="left:1113px;top:916px;width:148px;height:64px;"></div>
<div class="t" style="left:1124px;top:912px;font-size:18.4px;color:#222;letter-spacing:1.76px;">5</div>
<div style="position:absolute;left:1150px;top:859px;width:1px;height:23px;background:#333"></div>
<div class="gb" style="left:1484px;top:764px;width:201px;height:64px;"></div>
<div class="t" style="left:1558.9px;top:760px;font-size:18.4px;color:#111;letter-spacing:1.76px;">Home</div>
<div class="gb" style="left:1696px;top:764px;width:201px;height:64px;"></div>
<div class="t" style="left:1751.7px;top:760px;font-size:18.4px;color:#111;letter-spacing:1.76px;">Go&nbsp;Zero</div>
<div class="gb" style="left:1272px;top:840px;width:201px;height:64px;"></div>
<div class="t" style="left:1346.9px;top:836px;font-size:18.4px;color:#111;letter-spacing:1.76px;">Save</div>
<div class="gb" style="left:1484px;top:840px;width:201px;height:64px;"></div>
<div class="t" style="left:1558.9px;top:836px;font-size:18.4px;color:#111;letter-spacing:1.76px;">Scan</div>
<div class="gb" style="left:1696px;top:840px;width:201px;height:64px;"></div>
<div class="t" style="left:1738.9px;top:836px;font-size:18.4px;color:#111;letter-spacing:1.76px;">Add&nbsp;Point</div>
<div class="gb" style="left:1272px;top:916px;width:201px;height:64px;"></div>
<div class="t" style="left:1327.7px;top:911px;font-size:18.4px;color:#111;letter-spacing:1.76px;">Refresh</div>
<div class="gb" style="left:1696px;top:916px;width:201px;height:64px;"></div>
<div class="t" style="left:1726.1px;top:911px;font-size:18.4px;color:#111;letter-spacing:1.76px;">Clear&nbsp;Point</div>
<div id="bb"></div>
<div id="run"></div>
<div class="t" style="left:292.8px;top:994px;font-size:18.4px;color:#111;letter-spacing:1.76px;">Run</div>
<div class="gb" style="left:1px;top:1002px;width:200px;height:64px;"></div>
<div class="t" style="left:75.4px;top:998px;font-size:18.4px;color:#111;letter-spacing:1.76px;">Open</div>
<div class="gb" style="left:424px;top:1002px;width:201px;height:64px;"></div>
<div class="t" style="left:479.7px;top:999px;font-size:18.4px;color:#111;letter-spacing:1.76px;">Setting</div>
<div class="status" style="left:636px;top:1002px;width:1049px;height:64px;"></div>
<div style="position:absolute;left:650px;top:1010px;width:1024px;height:50px;overflow:hidden">
<div class="t" style="left:0px;top:-11px;font-size:18.4px;color:#111;letter-spacing:1.76px;">Work&nbsp;Size&nbsp;&nbsp;&nbsp;DX:100.0&nbsp;&nbsp;&nbsp;DY:23.938&nbsp;&nbsp;&nbsp;DA:4830.671&nbsp;&nbsp;&nbsp;DC:75.752&nbsp;&nbsp;&nbsp;DZ:0.0&nbsp;&nbsp;&nbsp;DU:11172.357</div>
</div>
<div class="gb" style="left:1696px;top:1002px;width:95px;height:64px;"></div>
<div class="t" style="left:1724.3px;top:998px;font-size:18.4px;color:#111;letter-spacing:1.76px;">Min</div>
<div class="gb" style="left:1802px;top:1002px;width:95px;height:64px;"></div>
<div class="t" style="left:1823.9px;top:998px;font-size:18.4px;color:#e01020;letter-spacing:1.76px;font-weight:bold;">Exit</div>
<div id="ov"><div class="pb" style="left:16px"></div><div class="pb" style="left:21px"></div><svg style="position:absolute;left:44px;top:5px" width="24" height="22" viewBox="0 0 24 22" fill="none"><circle cx="12" cy="9" r="4.2" stroke="#b8b6ba" stroke-width="1.6"/><line x1="7" y1="16.5" x2="17" y2="16.5" stroke="#b8b6ba" stroke-width="1.6"/><line x1="5" y1="17" x2="18" y2="3" stroke="#a8a6aa" stroke-width="1"/></svg></div>
</body></html>
